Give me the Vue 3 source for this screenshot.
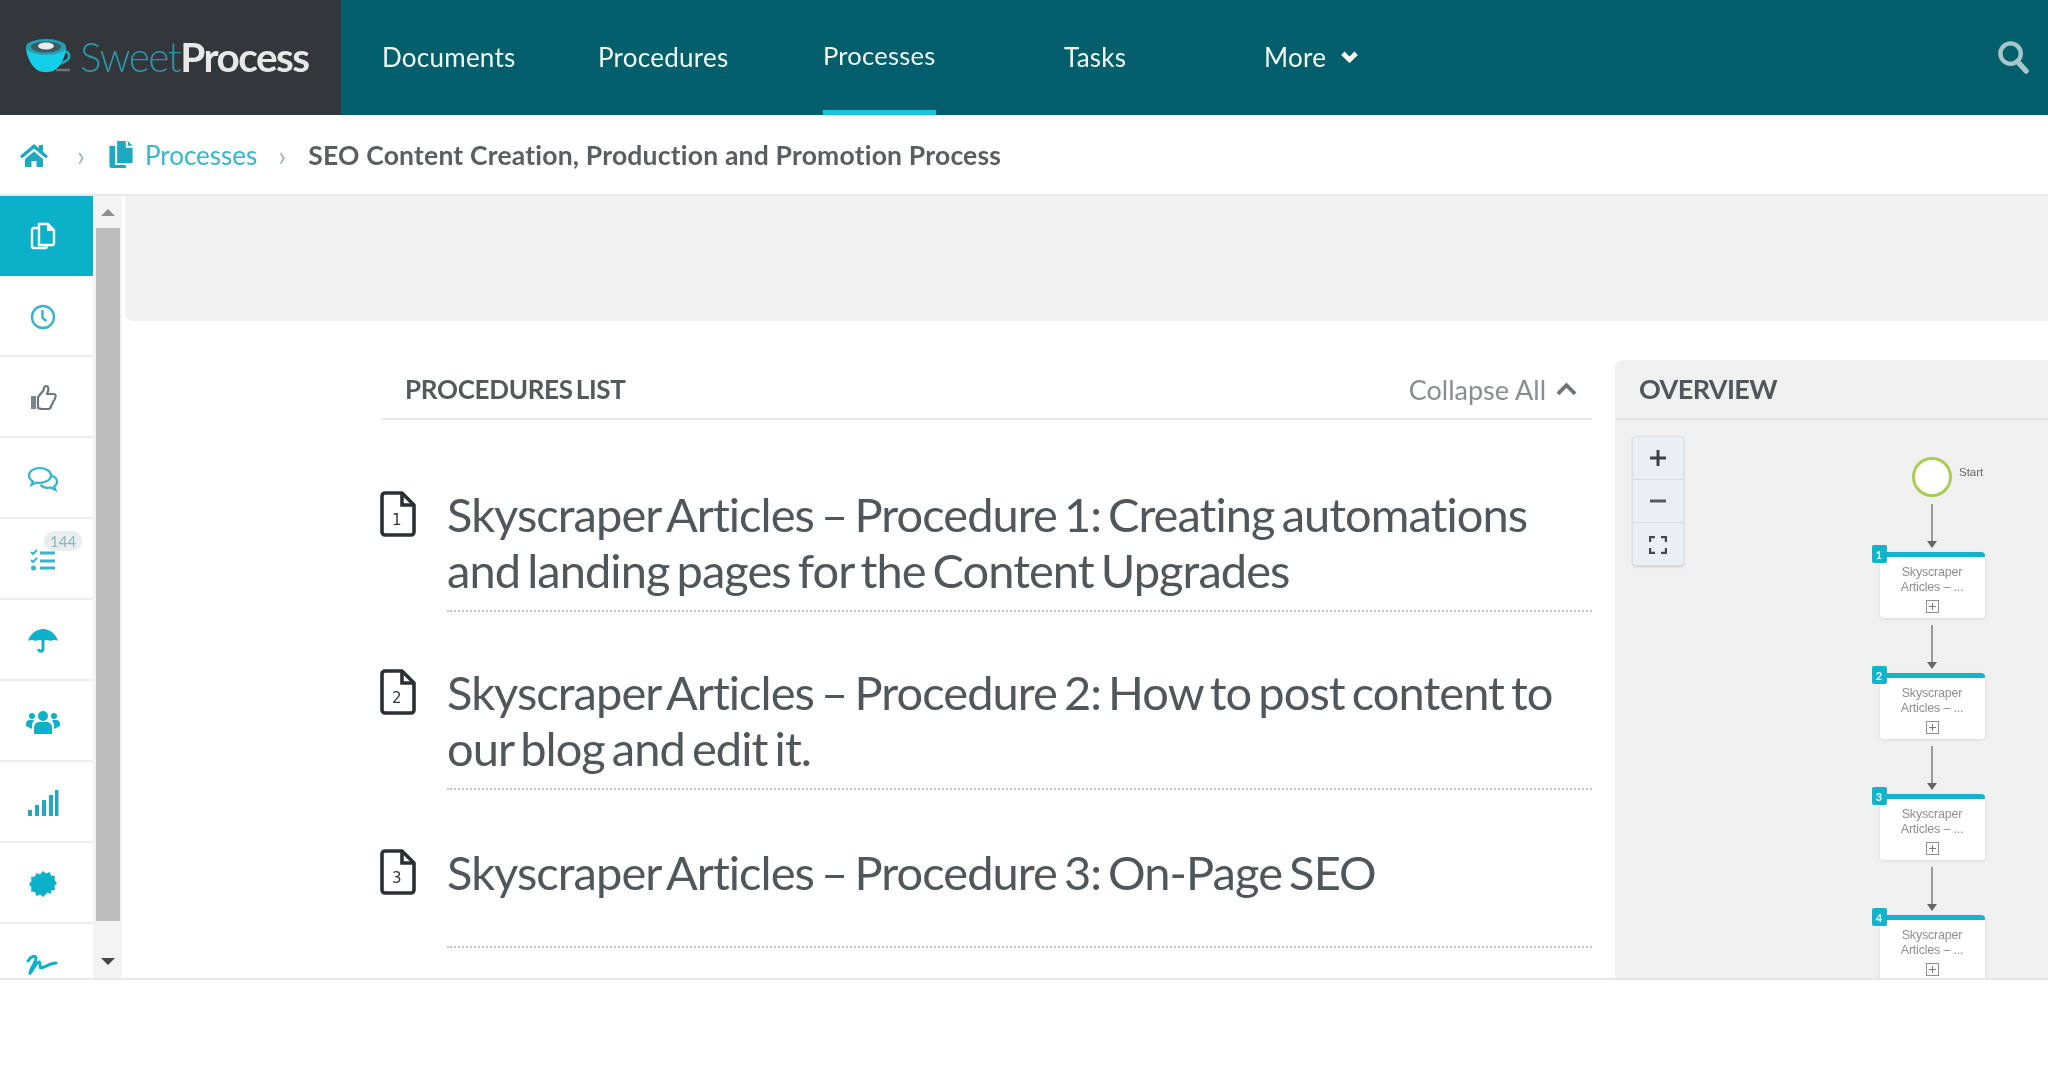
<template>
  <div class="page">
    <header class="topbar">
      <div class="logo">
        <svg class="logo-cup" viewBox="0 0 48 34" width="48" height="34" aria-hidden="true">
          <path d="M31 31h14" stroke="#6d7476" stroke-width="2.500"/>
          <path d="M38 13c7-2 8 6 3 9-2 1-5 3-8 3" fill="none" stroke="#1aa9bf" stroke-width="2.600"/>
          <path d="M1 8c0 9 6 21 13 24 4 1.500 10 1.500 14 0C35 29 41 17 41 8z" fill="#14cfea"/>
          <ellipse cx="21" cy="8" rx="20" ry="8" fill="#239fb3"/>
          <ellipse cx="21" cy="8" rx="15" ry="5.500" fill="#3c5b63"/>
          <ellipse cx="21" cy="7" rx="8" ry="3.500" fill="#e6eef0"/>
        </svg>
        <span class="logo-sweet">Sweet</span><span class="logo-process">Process</span>
      </div>
      <nav class="menu">
        <a class="menu-link" style="width:216px">Documents</a>
        <a class="menu-link" style="width:225px">Procedures</a>
        <a class="menu-link active">Processes</a>
        <a class="menu-link" style="width:200px">Tasks</a>
        <a class="menu-link more">More
          <svg viewBox="0 0 20 14" width="19" height="14" aria-hidden="true">
            <path d="M3 3l7 7 7-7" fill="none" stroke="#fff" stroke-width="5"/>
          </svg>
        </a>
      </nav>
      <svg class="search" viewBox="0 0 34 36" width="33" height="35" aria-hidden="true">
        <circle cx="14" cy="14" r="10.5" fill="none" stroke="#a5c8cc" stroke-width="4.5"/>
        <path d="M21 22l9 10" stroke="#a5c8cc" stroke-width="5.5" stroke-linecap="round"/>
      </svg>
    </header>

    <div class="crumbs">
      <svg class="crumb-home" viewBox="0 0 28 24" width="28" height="24" aria-hidden="true">
        <path d="M14 1L0 13l2 2.500L14 5.500l12 10 2-2.500-5-4.300V2h-4v3.200zM5 16v8h6.500v-6h5v6H23v-8l-9-7.500z" fill="#1fa9c0"/>
      </svg>
      <span class="crumb-sep first">›</span>
      <svg class="crumb-docs" viewBox="0 0 24 28" width="24" height="27" aria-hidden="true">
        <path d="M8 0h9v7h7v16H8z" fill="#1fa9c0"/>
        <path d="M19 0l5 5h-5z" fill="#1fa9c0"/>
        <path d="M6 5v20h11v3H2a2 2 0 0 1-2-2V5z" fill="#1fa9c0"/>
      </svg>
      <a class="crumb-link">Processes</a>
      <span class="crumb-sep">›</span>
      <span class="crumb-current">SEO Content Creation, Production and Promotion Process</span>
    </div>

    <div class="workspace">
      <aside class="rail">
        <div class="rail-items">
          <div class="rail-item current">
            <svg viewBox="0 0 26 28" width="26" height="28" aria-hidden="true">
              <path d="M9 2h9l6 6v13a2 2 0 0 1-2 2H9z" fill="none" stroke="#fff" stroke-width="2.400" stroke-linejoin="round"/>
              <path d="M9 6H4a2 2 0 0 0-2 2v16a2 2 0 0 0 2 2h11a2 2 0 0 0 2-2v-1" fill="none" stroke="#fff" stroke-width="2.400"/>
              <path d="M17 2v7h7" fill="#fff"/>
            </svg>
          </div>
          <div class="rail-item">
            <svg viewBox="0 0 26 26" width="26" height="26" aria-hidden="true">
              <circle cx="13" cy="13" r="11" fill="none" stroke="#36b4c8" stroke-width="2.400"/>
              <path d="M12.500 6v8l4 3" fill="none" stroke="#36b4c8" stroke-width="2.400"/>
            </svg>
          </div>
          <div class="rail-item">
            <svg viewBox="0 0 28 28" width="28" height="28" aria-hidden="true">
              <path d="M2 12h5v13H2z" fill="#7d858a"/>
              <path d="M9 13l5-6c1-2 1-5 3-5 3 0 3 4 1 8h7c2 0 2 3 1 4 0 2-1 3-2 4 0 2-1 3-2 4 0 2-1 3-3 3h-6c-2 0-3-1-4-1z" fill="none" stroke="#6e767b" stroke-width="2.200" stroke-linejoin="round"/>
            </svg>
          </div>
          <div class="rail-item">
            <svg viewBox="0 0 32 26" width="32" height="26" aria-hidden="true">
              <path d="M13 2C7 2 2 5 2 9.500c0 2.500 1.500 4.500 4 6l-1.500 3.500 5-2.500c1.200.3 2.400.4 3.500.4 6 0 11-3.400 11-7.400S19 2 13 2z" fill="#fff" stroke="#36b4c8" stroke-width="2.200"/>
              <path d="M24 9.500c3.500 1 6 3.300 6 6.200 0 2-1.200 3.700-3 4.800l1.500 3.500-5-2.500c-4 .8-8-.4-10-2.800" fill="none" stroke="#36b4c8" stroke-width="2.200"/>
            </svg>
          </div>
          <div class="rail-item">
            <span class="rail-count">144</span>
            <svg viewBox="0 0 26 24" width="26" height="24" aria-hidden="true">
              <path d="M1 4l2 2 4-4M1 12l2 2 4-4" fill="none" stroke="#36b4c8" stroke-width="2"/>
              <circle cx="3.500" cy="20" r="2.500" fill="#36b4c8"/>
              <path d="M10 5h15M10 13h15M10 20h15" stroke="#36b4c8" stroke-width="3"/>
            </svg>
          </div>
          <div class="rail-item">
            <svg viewBox="0 0 30 26" width="30" height="26" aria-hidden="true">
              <path d="M15 1C8 1 2 6 0 13c2-1.500 5-1.500 7.500 0 2.500-1.500 5-1.500 7.500 0 2.500-1.500 5-1.500 7.500 0 2.500-1.500 5.500-1.500 7.500 0C28 6 22 1 15 1z" fill="#0ab1c9"/>
              <path d="M15 12v9c0 3-4 3-4.500 0" fill="none" stroke="#0ab1c9" stroke-width="2.800"/>
            </svg>
          </div>
          <div class="rail-item">
            <svg viewBox="0 0 34 24" width="34" height="24" aria-hidden="true">
              <circle cx="17" cy="6" r="5" fill="#0ab1c9"/>
              <path d="M8 24v-6c0-4 3-6 5-6h8c2 0 5 2 5 6v6z" fill="#0ab1c9"/>
              <circle cx="6" cy="6" r="3" fill="#0ab1c9"/>
              <circle cx="28" cy="6" r="3" fill="#0ab1c9"/>
              <path d="M0 16v-2c0-3 2-4 3-4h5l-2 4v5zM34 16v-2c0-3-2-4-3-4h-5l2 4v5z" fill="#0ab1c9"/>
            </svg>
          </div>
          <div class="rail-item">
            <svg viewBox="0 0 32 26" width="32" height="26" aria-hidden="true">
              <path d="M1 20h4v6H1zM8 15h4v11H8zM15 10h4v16h-4zM22 5h4v21h-4zM28 0h3.500v26H28z" fill="#24a8c0"/>
            </svg>
          </div>
          <div class="rail-item">
            <svg viewBox="0 0 28 28" width="28" height="28" aria-hidden="true">
              <path d="M14 1l3 2.500 3.500-1.500 1.500 3.500 4 .5-.5 4 2.500 3-2.500 3 .5 4-4 .5L22 24l-3.500-1.500L14 27l-3-2.500-3.500 1.500L6 22l-4-.5.5-4L0 14l2.500-3-.5-4 4-.5L7.500 3l3.500 1.500z" fill="#0ab1c9"/>
            </svg>
          </div>
          <div class="rail-item">
            <svg viewBox="0 0 34 24" width="34" height="24" aria-hidden="true">
              <path d="M2 8c3-5 8-6 8-3 0 4-6 12-6 15 0 2 6-11 9-11 2 0 0 6 2 6 3 0 9-5 15-5" fill="none" stroke="#0ab1c9" stroke-width="3" stroke-linecap="round"/>
            </svg>
          </div>
        </div>
        <div class="rail-scroll">
          <span class="arrow-up"></span>
          <div class="rail-thumb"></div>
          <span class="arrow-down"></span>
        </div>
      </aside>

      <main class="main">
        <div class="band"></div>
        <div class="columns">
          <section class="list">
            <div class="list-head">
              <h2>PROCEDURES LIST</h2>
              <a class="collapse">Collapse All
                <svg viewBox="0 0 24 14" width="23" height="14" aria-hidden="true">
                  <path d="M3 12l9-9 9 9" fill="none" stroke="#6f7478" stroke-width="4"/>
                </svg>
              </a>
            </div>
            <div v-for="item in procedures" :key="item.num" class="proc">
              <div class="proc-icon">
                <svg viewBox="0 0 36 46" width="36" height="46" aria-hidden="true">
                  <path d="M2 5a3 3 0 0 1 3-3h17l12 12v27a3 3 0 0 1-3 3H5a3 3 0 0 1-3-3z" fill="none" stroke="#2c3034" stroke-width="3.600" stroke-linejoin="round"/>
                  <path d="M22 2v12h12" fill="none" stroke="#2c3034" stroke-width="3.600"/>
                </svg>
                <span>{{ item.num }}</span>
              </div>
              <h3 class="proc-title">{{ item.title }}</h3>
            </div>
          </section>

          <section class="overview">
            <h2 class="overview-head">OVERVIEW</h2>
            <div class="overview-body">
              <div class="zoom-tools">
                <div class="zoom-btn">
                  <svg viewBox="0 0 18 18" width="18" height="18" aria-hidden="true"><path d="M9 1v16M1 9h16" stroke="#3c4043" stroke-width="3"/></svg>
                </div>
                <div class="zoom-btn">
                  <svg viewBox="0 0 18 18" width="18" height="18" aria-hidden="true"><path d="M1 9h16" stroke="#55595c" stroke-width="3"/></svg>
                </div>
                <div class="zoom-btn">
                  <svg viewBox="0 0 18 18" width="18" height="18" aria-hidden="true"><path d="M1 6V1h5M12 1h5v5M17 12v5h-5M6 17H1v-5" fill="none" stroke="#44484b" stroke-width="2.400"/></svg>
                </div>
              </div>
              <div class="flow">
                <div class="start">
                  <span class="start-dot"></span>
                  <span class="start-label">Start</span>
                </div>
                <template v-for="n in 4" :key="n">
                  <div class="link"></div>
                  <div class="node">
                    <span class="node-badge">{{ n }}</span>
                    <p>Skyscraper<br>Articles – ...</p>
                    <span class="node-plus"></span>
                  </div>
                </template>
              </div>
            </div>
          </section>
        </div>
      </main>
    </div>
  </div>
</template>

<script setup>
const procedures = [
  { num: 1, title: 'Skyscraper Articles – Procedure 1: Creating automations and landing pages for the Content Upgrades' },
  { num: 2, title: 'Skyscraper Articles – Procedure 2: How to post content to our blog and edit it.' },
  { num: 3, title: 'Skyscraper Articles – Procedure 3: On-Page SEO' }
]
</script>

<style>
html, body { margin: 0; background: #fff; }
</style>

<style scoped>
.page {
  width: 2048px;
  height: 1072px;
  overflow: hidden;
  background: #fff;
  font-family: Lato, "Open Sans", sans-serif;
  color: #555;
  filter: blur(.6px);
}

/* header */
.topbar {
  display: flex;
  align-items: center;
  height: 115px;
  background: #005f6b;
}
.logo {
  display: flex;
  align-items: center;
  width: 341px;
  height: 100%;
  padding: 0 0 3px 25px;
  box-sizing: border-box;
  background: #33373b;
  font-size: 40.500px;
  letter-spacing: -1.500px;
}
.logo-cup { margin: 0 7px 0 0; }
.logo-sweet { color: #2c97a8; font-weight: 300; }
.logo-process { color: #e8e8e8; font-weight: 700; }
.menu {
  display: flex;
  height: 100%;
  margin-left: 41px;
}
.menu-link {
  display: flex;
  align-items: center;
  height: 100%;
  padding-bottom: 1px;
  box-sizing: border-box;
  color: #f2f7f8;
  font-size: 26px;
  letter-spacing: .25px;
}
.menu-link.active {
  width: 113px;
  margin-right: 128px;
  border-bottom: 5px solid #16c6e0;
  padding-bottom: 1px;
  font-size: 25.500px;
}
.menu-link.more svg { margin-left: 14px; }
.search { margin-left: auto; margin-right: 18px; }

/* breadcrumb */
.crumbs {
  display: flex;
  align-items: center;
  height: 81px;
  box-sizing: border-box;
  padding-left: 20px;
  border-bottom: 2px solid #e9e9e9;
  font-size: 26px;
}
.crumb-sep { color: #a9b4b8; margin: 0 22px 0 21px; font-size: 28px; line-height: 1; }
.crumb-sep.first { margin: 0 24px 0 29px; }
.crumb-docs { margin-right: 12px; }
.crumb-link { color: #3ab6ca; }
.crumb-current { color: #5a5e61; font-weight: 700; letter-spacing: .2px; font-size: 26.500px; }

/* left rail */
.workspace {
  display: flex;
  height: 784px;
  overflow: hidden;
  border-bottom: 2px solid #e8e8e8;
  box-sizing: border-box;
}
.rail {
  display: flex;
  flex: none;
  width: 122px;
}
.rail-items {
  width: 93px;
  flex: none;
}
.rail-item {
  position: relative;
  display: flex;
  align-items: center;
  justify-content: center;
  width: 86px;
  height: 76px;
  padding: 3px 7px 0 0;
  box-sizing: content-box;
  border-bottom: 2px solid #ececec;
}
.rail-item.current {
  height: 80px;
  padding-top: 0;
  background: #0ab1c9;
  border-bottom: 0;
}
.rail-count {
  position: absolute;
  top: 12px;
  left: 44px;
  padding: 1px 6px;
  border-radius: 10px;
  background: #e9eded;
  color: #8ab3bd;
  font-size: 15px;
}
.rail-scroll {
  display: flex;
  flex-direction: column;
  align-items: center;
  flex: none;
  width: 29px;
  background: #f3f3f3;
}
.arrow-up, .arrow-down {
  width: 0;
  height: 0;
  border-left: 7px solid transparent;
  border-right: 7px solid transparent;
}
.arrow-up { margin: 13px 0 12px; border-bottom: 7px solid #8f8f8f; }
.arrow-down { margin-top: 37px; border-top: 7px solid #444; }
.rail-thumb {
  flex: none;
  width: 24px;
  height: 693px;
  background: #bdbdbd;
}

/* main */
.main {
  flex: 1;
  min-width: 0;
}
.band {
  height: 125px;
  margin-left: 3px;
  border-radius: 0 0 0 8px;
  background: #f1f1f1;
}
.columns {
  display: flex;
  padding: 39px 0 0 260px;
}
.list {
  flex: none;
  width: 1210px;
}
.list-head {
  display: flex;
  align-items: center;
  justify-content: space-between;
  height: 58px;
  box-sizing: content-box;
  padding: 0 14px 0 23px;
  border-bottom: 2px solid #e8e8e8;
}
.list-head h2 {
  margin: 0;
  font-size: 26px;
  font-weight: 700;
  letter-spacing: -.3px;
  word-spacing: -3px;
  color: #55595c;
}
.collapse {
  display: flex;
  align-items: center;
  gap: 9px;
  color: #8a8d90;
  font-size: 27px;
}
.proc { display: flex; }
.list-head + .proc { margin-top: 66px; }
.proc + .proc { margin-top: 52px; }
.proc + .proc + .proc { margin-top: 54px; }
.proc-icon {
  position: relative;
  flex: none;
  width: 67px;
  height: 46px;
  margin: 5px 0 0 -2px;
}
.proc-icon span {
  position: absolute;
  left: 12px;
  top: 20px;
  font-family: "DejaVu Sans", sans-serif;
  font-size: 15px;
  color: #33373a;
}
.proc-title {
  flex: 1;
  min-height: 90px;
  margin: 0;
  padding-bottom: 12px;
  border-bottom: 2px dotted #c4c4c4;
  font-size: 47px;
  font-weight: 400;
  line-height: 56px;
  letter-spacing: -.95px;
  word-spacing: -4px;
  color: #50565a;
}

/* overview */
.overview {
  flex: 1;
  min-width: 0;
  height: 700px;
  margin-left: 23px;
  border-radius: 8px 0 0 0;
  background: #f0f0f0;
}
.overview-head {
  height: 58px;
  margin: 0;
  padding-left: 24px;
  border-bottom: 2px solid #e2e2e2;
  box-sizing: content-box;
  font-size: 27px;
  font-weight: 700;
  line-height: 58px;
  letter-spacing: -.6px;
  color: #50565a;
}
.overview-body {
  display: flex;
  padding-left: 17px;
}
.zoom-tools {
  flex: none;
  width: 50px;
  height: 128px;
  margin-top: 16px;
  border: 1px solid #dcdfe2;
  border-radius: 4px;
  background: #eceff2;
  box-shadow: 0 1px 2px #ccc;
}
.zoom-btn {
  display: flex;
  align-items: center;
  justify-content: center;
  height: 43px;
  box-sizing: border-box;
  border-bottom: 1px solid #d8dbde;
}
.zoom-btn:last-child { border-bottom: 0; }
.flow {
  display: flex;
  flex-direction: column;
  align-items: center;
  width: 112px;
  margin-left: 192px;
  padding-top: 37px;
}
.start {
  position: relative;
  height: 40px;
}
.start-dot {
  display: block;
  width: 34px;
  height: 34px;
  border: 3px solid #a9cc52;
  border-radius: 50%;
  background: #fff;
}
.start-label {
  position: absolute;
  left: 47px;
  top: 9px;
  font-family: "Liberation Sans", sans-serif;
  font-size: 11.500px;
  color: #66686a;
}
.link {
  position: relative;
  flex: none;
  width: 2px;
  height: 43px;
  margin-top: 7px;
  background: #999;
}
.link::after {
  content: "";
  position: absolute;
  left: -4px;
  bottom: -1px;
  border-left: 5px solid transparent;
  border-right: 5px solid transparent;
  border-top: 7px solid #666;
}
.node {
  position: relative;
  flex: none;
  width: 105px;
  height: 66px;
  margin-top: 5px;
  box-sizing: border-box;
  border-top: 5px solid #12b3cb;
  border-radius: 4px;
  background: #fff;
  box-shadow: 0 1px 3px #d8d8d8;
  text-align: center;
}
.node p {
  margin: 8px 0 5px;
  font-family: "Liberation Sans", sans-serif;
  font-size: 12.500px;
  line-height: 15px;
  letter-spacing: -.2px;
  color: #8d8f91;
}
.node-badge {
  position: absolute;
  left: -8px;
  top: -12px;
  width: 15px;
  height: 18px;
  background: #12b3cb;
  border-radius: 2px;
  color: #e8fbff;
  font-size: 11px;
  font-weight: 700;
  line-height: 19px;
}
.node-plus {
  display: block;
  position: relative;
  width: 13px;
  height: 13px;
  margin: 0 auto;
  border: 1px solid #8d8f91;
  box-sizing: border-box;
  background: linear-gradient(#777, #777) center / 7px 1px no-repeat,
    linear-gradient(#777, #777) center / 1px 7px no-repeat;
}
</style>
